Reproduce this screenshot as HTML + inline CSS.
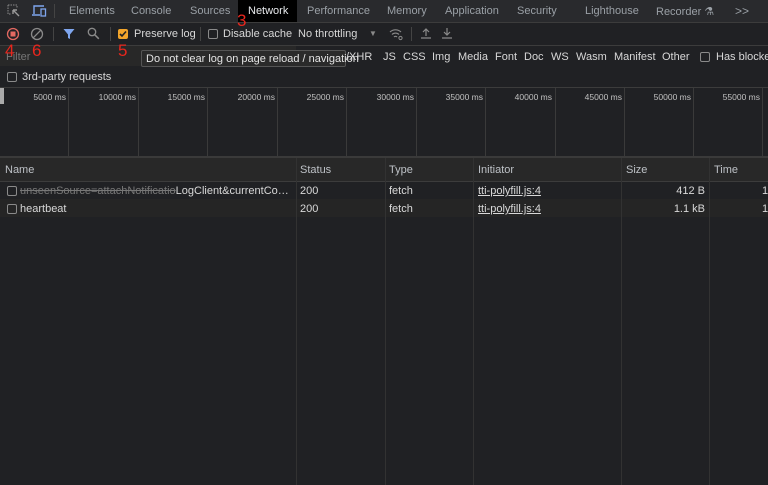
<!DOCTYPE html>
<html><head><style>
*{margin:0;padding:0;box-sizing:border-box}
body{width:768px;height:485px;background:#202124;font-family:"Liberation Sans",sans-serif;font-size:11px;color:#bdc1c6;position:relative;overflow:hidden}
.a{position:absolute;white-space:nowrap}
.hl{position:absolute;left:0;width:768px;height:1px;background:#3c3c3c}
.vl{position:absolute;width:1px;background:#3a3a3a}
.gv{position:absolute;width:1px;background:#323232}
.cb{position:absolute;width:10px;height:10px;border:1px solid #8a8a8a;border-radius:2px}
.red{position:absolute;color:#e8261d;font-size:17px;line-height:17px}
.tl{position:absolute;top:92px;font-size:8.5px;color:#c0c0c0;text-align:right;width:60px}
.ft{position:absolute;top:51px;color:#d8d8d8}
</style></head><body>
<div class="a" style="left:0;top:0;width:768px;height:22px;background:#292a2d"></div>
<svg class="a" style="left:7px;top:4px" width="14" height="14" viewBox="0 0 14 14"><path d="M1 1h9v3M1 1v9h3" stroke="#8a8a8a" stroke-dasharray="1.5 1" fill="none"/><path d="M6 6l6 6M6 6h4M6 6v4" stroke="#9a9a9a" stroke-width="1.4" fill="none"/></svg>
<svg class="a" style="left:31px;top:4px" width="16" height="14" viewBox="0 0 16 14"><path d="M3 10V2h10M1 11h8" stroke="#7fa6ee" stroke-width="1.4" fill="none"/><rect x="10" y="5" width="4.5" height="7" stroke="#7fa6ee" stroke-width="1.3" fill="none"/></svg>
<div class="vl" style="left:54px;top:4px;height:14px;background:#444"></div>
<div class="a" style="left:69px;top:5px;color:#9aa0a6">Elements</div>
<div class="a" style="left:131px;top:5px;color:#9aa0a6">Console</div>
<div class="a" style="left:190px;top:5px;color:#9aa0a6">Sources</div>
<div class="a" style="left:238px;top:0;width:59px;height:22px;background:#000"></div>
<div class="a" style="left:248px;top:5px;color:#e8eaed">Network</div>
<div class="a" style="left:307px;top:5px;color:#9aa0a6">Performance</div>
<div class="a" style="left:387px;top:5px;color:#9aa0a6">Memory</div>
<div class="a" style="left:445px;top:5px;color:#9aa0a6">Application</div>
<div class="a" style="left:517px;top:5px;color:#9aa0a6">Security</div>
<div class="a" style="left:585px;top:5px;color:#9aa0a6">Lighthouse</div>
<div class="a" style="left:656px;top:5px;color:#9aa0a6">Recorder ⚗</div>
<div class="a" style="left:735px;top:4px;color:#9aa0a6;font-size:12px">&gt;&gt;</div>
<div class="hl" style="top:22px"></div>
<svg class="a" style="left:6px;top:27px" width="14" height="14"><circle cx="7" cy="7" r="5.5" stroke="#e46962" stroke-width="1.3" fill="none"/><rect x="4.5" y="4.5" width="5" height="5" fill="#e46962"/></svg>
<svg class="a" style="left:30px;top:27px" width="14" height="14"><circle cx="7" cy="7" r="5.5" stroke="#8a8a8a" stroke-width="1.3" fill="none"/><path d="M3.2 10.8L10.8 3.2" stroke="#8a8a8a" stroke-width="1.3"/></svg>
<div class="vl" style="left:53px;top:27px;height:14px;background:#444"></div>
<svg class="a" style="left:63px;top:28px" width="12" height="12"><path d="M0.5 1h11L7 6.5V11L5 10V6.5z" fill="#7fa6ee"/></svg>
<svg class="a" style="left:87px;top:27px" width="13" height="13"><circle cx="5" cy="5" r="3.7" stroke="#8a8a8a" stroke-width="1.3" fill="none"/><path d="M7.8 7.8l4 4" stroke="#8a8a8a" stroke-width="1.5"/></svg>
<div class="vl" style="left:110px;top:27px;height:14px;background:#444"></div>
<div class="a" style="left:118px;top:29px;width:10px;height:10px;background:#f3a52b;border-radius:2px"></div>
<svg class="a" style="left:118px;top:29px" width="10" height="10"><path d="M2 5l2 2 4-4.5" stroke="#202124" stroke-width="1.6" fill="none"/></svg>
<div class="a" style="left:134px;top:28px;color:#d8d8d8">Preserve log</div>
<div class="vl" style="left:200px;top:27px;height:14px;background:#444"></div>
<div class="cb" style="left:208px;top:29px"></div>
<div class="a" style="left:223px;top:28px;color:#d8d8d8">Disable cache</div>
<div class="a" style="left:298px;top:28px;color:#d8d8d8">No throttling</div>
<div class="a" style="left:369px;top:29px;color:#8a8a8a;font-size:8px">▼</div>
<svg class="a" style="left:388px;top:27px" width="16" height="14"><path d="M2 5a8 8 0 0 1 11 0M4 7.5a5 5 0 0 1 7 0M6 10a2 2 0 0 1 3 0" stroke="#8a8a8a" stroke-width="1.2" fill="none"/><circle cx="12.5" cy="11" r="1.6" stroke="#8a8a8a" fill="none"/></svg>
<div class="vl" style="left:411px;top:27px;height:14px;background:#444"></div>
<svg class="a" style="left:420px;top:27px" width="12" height="13"><path d="M6 9V2M3 5l3-3 3 3M1 11h10" stroke="#8a8a8a" stroke-width="1.2" fill="none"/></svg>
<svg class="a" style="left:441px;top:27px" width="12" height="13"><path d="M6 1v7M3 5l3 3 3-3M1 11h10" stroke="#8a8a8a" stroke-width="1.2" fill="none"/></svg>
<div class="hl" style="top:45px"></div>
<div class="a" style="left:0;top:46px;width:296px;height:20px;background:#282828"></div>
<div class="a" style="left:6px;top:51px;color:#777">Filter</div>
<div class="ft" style="left:346px">/XHR</div>
<div class="ft" style="left:383px">JS</div>
<div class="ft" style="left:403px">CSS</div>
<div class="ft" style="left:432px">Img</div>
<div class="ft" style="left:458px">Media</div>
<div class="ft" style="left:495px">Font</div>
<div class="ft" style="left:524px">Doc</div>
<div class="ft" style="left:551px">WS</div>
<div class="ft" style="left:576px">Wasm</div>
<div class="ft" style="left:614px">Manifest</div>
<div class="ft" style="left:662px">Other</div>
<div class="cb" style="left:700px;top:52px"></div>
<div class="a" style="left:716px;top:51px;color:#d8d8d8">Has blocke</div>
<div class="cb" style="left:7px;top:72px"></div>
<div class="a" style="left:22px;top:71px;color:#d8d8d8">3rd-party requests</div>
<div class="a" style="left:141px;top:50px;width:205px;height:17px;background:#2a2a2a;border:1px solid #555;border-radius:2px;color:#e4e4e4;padding:2px 0 0 4px">Do not clear log on page reload / navigation</div>
<div class="hl" style="top:87px"></div>
<div class="a" style="left:0;top:88px;width:4px;height:16px;background:#aaa"></div>
<div class="vl" style="left:68px;top:88px;height:68px"></div>
<div class="vl" style="left:138px;top:88px;height:68px"></div>
<div class="vl" style="left:207px;top:88px;height:68px"></div>
<div class="vl" style="left:277px;top:88px;height:68px"></div>
<div class="vl" style="left:346px;top:88px;height:68px"></div>
<div class="vl" style="left:416px;top:88px;height:68px"></div>
<div class="vl" style="left:485px;top:88px;height:68px"></div>
<div class="vl" style="left:555px;top:88px;height:68px"></div>
<div class="vl" style="left:624px;top:88px;height:68px"></div>
<div class="vl" style="left:693px;top:88px;height:68px"></div>
<div class="vl" style="left:762px;top:88px;height:68px"></div>
<div class="tl" style="left:6px">5000 ms</div>
<div class="tl" style="left:76px">10000 ms</div>
<div class="tl" style="left:145px">15000 ms</div>
<div class="tl" style="left:215px">20000 ms</div>
<div class="tl" style="left:284px">25000 ms</div>
<div class="tl" style="left:354px">30000 ms</div>
<div class="tl" style="left:423px">35000 ms</div>
<div class="tl" style="left:492px">40000 ms</div>
<div class="tl" style="left:562px">45000 ms</div>
<div class="tl" style="left:631px">50000 ms</div>
<div class="tl" style="left:700px">55000 ms</div>
<div class="hl" style="top:156px;height:2px;background:#3a3a3a"></div>
<div class="a" style="left:0;top:158px;width:768px;height:23px;background:#282828"></div>
<div class="hl" style="top:181px"></div>
<div class="a" style="left:0;top:199px;width:768px;height:18px;background:#252525"></div>
<div class="gv" style="left:296px;top:158px;height:327px"></div>
<div class="gv" style="left:385px;top:158px;height:327px"></div>
<div class="gv" style="left:473px;top:158px;height:327px"></div>
<div class="gv" style="left:621px;top:158px;height:327px"></div>
<div class="gv" style="left:709px;top:158px;height:327px"></div>
<div class="a" style="left:5px;top:164px">Name</div>
<div class="a" style="left:300px;top:164px">Status</div>
<div class="a" style="left:389px;top:164px">Type</div>
<div class="a" style="left:478px;top:164px">Initiator</div>
<div class="a" style="left:626px;top:164px">Size</div>
<div class="a" style="left:714px;top:164px">Time</div>
<div class="cb" style="left:7px;top:186px"></div>
<div class="a" style="left:20px;top:185px;color:#d8d8d8"><span style="text-decoration:line-through;color:#777">unseenSource=attachNotificatio</span>LogClient&amp;currentCo…</div>
<div class="a" style="left:300px;top:185px;color:#d8d8d8">200</div>
<div class="a" style="left:389px;top:185px;color:#d8d8d8">fetch</div>
<div class="a" style="left:478px;top:185px;color:#d8d8d8;text-decoration:underline">tti-polyfill.js:4</div>
<div class="a" style="left:660px;top:185px;width:45px;text-align:right;color:#d8d8d8">412 B</div>
<div class="a" style="left:762px;top:185px;color:#d8d8d8">1</div>
<div class="cb" style="left:7px;top:204px"></div>
<div class="a" style="left:20px;top:203px;color:#d8d8d8">heartbeat</div>
<div class="a" style="left:300px;top:203px;color:#d8d8d8">200</div>
<div class="a" style="left:389px;top:203px;color:#d8d8d8">fetch</div>
<div class="a" style="left:478px;top:203px;color:#d8d8d8;text-decoration:underline">tti-polyfill.js:4</div>
<div class="a" style="left:660px;top:203px;width:45px;text-align:right;color:#d8d8d8">1.1 kB</div>
<div class="a" style="left:762px;top:203px;color:#d8d8d8">1</div>
<div class="red" style="left:237px;top:12px">3</div>
<div class="red" style="left:5px;top:42px">4</div>
<div class="red" style="left:32px;top:42px">6</div>
<div class="red" style="left:118px;top:42px">5</div>
</body></html>
